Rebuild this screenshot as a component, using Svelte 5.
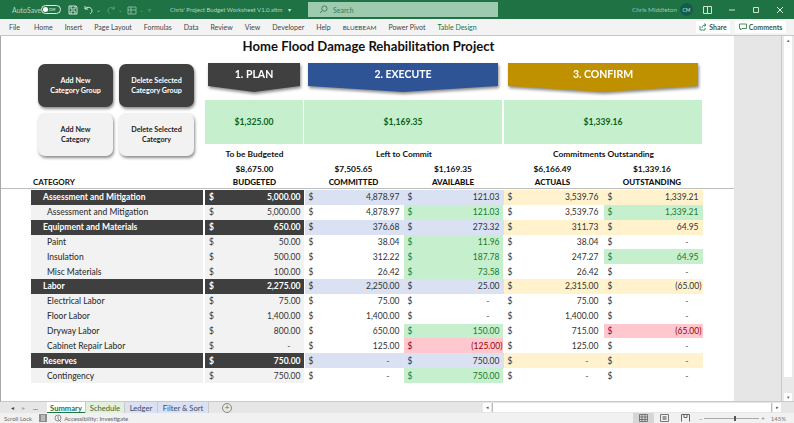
<script>
  const tabs = ['File', 'Home', 'Insert', 'Page Layout', 'Formulas', 'Data', 'Review', 'View', 'Developer', 'Help', 'BLUEBEAM', 'Power Pivot', 'Table Design'];

  // t holds the tone per column: g = green, r = red
  const rows = [
    { name: 'Assessment and Mitigation', group: true, v: ['5,000.00', '4,878.97', '121.03', '3,539.76', '1,339.21'] },
    { name: 'Assessment and Mitigation', v: ['5,000.00', '4,878.97', '121.03', '3,539.76', '1,339.21'], t: ['', '', 'g', '', 'g'] },
    { name: 'Equipment and Materials', group: true, v: ['650.00', '376.68', '273.32', '311.73', '64.95'] },
    { name: 'Paint', v: ['50.00', '38.04', '11.96', '38.04', '-'], t: ['', '', 'g', '', ''] },
    { name: 'Insulation', v: ['500.00', '312.22', '187.78', '247.27', '64.95'], t: ['', '', 'g', '', 'g'] },
    { name: 'Misc Materials', v: ['100.00', '26.42', '73.58', '26.42', '-'], t: ['', '', 'g', '', ''] },
    { name: 'Labor', group: true, v: ['2,275.00', '2,250.00', '25.00', '2,315.00', '(65.00)'] },
    { name: 'Electrical Labor', v: ['75.00', '75.00', '-', '75.00', '-'] },
    { name: 'Floor Labor', v: ['1,400.00', '1,400.00', '-', '1,400.00', '-'] },
    { name: 'Dryway Labor', v: ['800.00', '650.00', '150.00', '715.00', '(65.00)'], t: ['', '', 'g', '', 'r'] },
    { name: 'Cabinet Repair Labor', v: ['-', '125.00', '(125.00)', '125.00', '-'], t: ['', '', 'r', '', ''] },
    { name: 'Reserves', group: true, v: ['750.00', '-', '750.00', '-', '-'] },
    { name: 'Contingency', v: ['750.00', '-', '750.00', '-', '-'], t: ['', '', 'g', '', ''] }
  ];

  const cols = ['budget', 'commit', 'avail', 'actual', 'out'];

  function cellClass(row, i) {
    let c = 'num ' + cols[i];
    if (row.group) c += ' grp';
    if (row.t && row.t[i]) c += ' tone-' + row.t[i];
    return c;
  }
</script>

<div class="excel">
  <header class="titlebar">
    <span class="autosave">AutoSave</span>
    <span class="toggle"><i></i>Off</span>
    <svg class="qa save" width="10" height="10" viewBox="0 0 10 10"><path d="M1 1h7l1 1v7H1zM3 1v3h4V1M3 9V6h4v3" fill="none" stroke="#cfe3d8"/></svg>
    <svg class="qa undo" width="11" height="10" viewBox="0 0 11 10"><path d="M2 1v3h3M2 4c2-3 7-2 7 2 0 1-1 2-2 3" fill="none" stroke="#d5e7dd"/></svg>
    <span class="caret">⌄</span>
    <svg class="qa redo" width="10" height="10" viewBox="0 0 11 10"><path d="M9 1v3H6M9 4C7 1 2 2 2 6c0 1 1 2 2 3" fill="none" stroke="#5fa27f"/></svg>
    <span class="caret dim">⌄</span>
    <svg class="qa grid" width="10" height="10" viewBox="0 0 10 10"><path d="M1 2h8v7H1zM1 5h8M4 2v7" fill="none" stroke="#7fb79a"/></svg>
    <span class="caret dim">⌄</span>
    <span class="caret custom">▿</span>
    <span class="doc">Chris' Project Budget Worksheet V1.0.xltm</span>
    <span class="caret doc-caret">▾</span>
    <div class="search">
      <svg width="9" height="9" viewBox="0 0 10 10"><circle cx="6" cy="4" r="3" fill="none" stroke="#3d7a59"/><path d="M4 6L1 9" stroke="#3d7a59"/></svg>
      <span>Search</span>
    </div>
    <span class="user">Chris Middleton</span>
    <span class="avatar">CM</span>
    <div class="winbtns">
      <svg width="9" height="8" viewBox="0 0 9 8"><path d="M.5.5h8v7h-8zM4.5.5v7" fill="none" stroke="#cfe3d8"/></svg>
      <svg width="8" height="8" viewBox="0 0 8 8"><path d="M1 4h6" stroke="#cfe3d8"/></svg>
      <svg width="8" height="8" viewBox="0 0 8 8"><path d="M1.5 1.5h5v5h-5z" fill="none" stroke="#cfe3d8"/></svg>
      <svg width="8" height="8" viewBox="0 0 8 8"><path d="M1 1l6 6M7 1L1 7" stroke="#e4efe9"/></svg>
    </div>
  </header>

  <nav class="ribbon">
    {#each tabs as tab}
      <span class="rtab" class:design={tab === 'Table Design'} class:file={tab === 'File'} class:caps={tab === 'BLUEBEAM'}>{tab}</span>
    {/each}
    <span class="actions">
      <span class="action share">
        <svg width="8" height="8" viewBox="0 0 8 8"><path d="M1 3v4h5V5M3 5c0-2 1-3 4-3M5 .5L7 2 5 3.5" fill="none" stroke="#217346" stroke-width=".8"/></svg>
        Share
      </span>
      <span class="action comments">
        <svg width="8" height="8" viewBox="0 0 8 8"><path d="M.5 1h7v4.500H3L1.500 7V5.500h-1z" fill="none" stroke="#217346" stroke-width=".8"/></svg>
        Comments
      </span>
    </span>
  </nav>

  <div class="workarea">
    <main class="sheet">
      <h1>Home Flood Damage Rehabilitation Project</h1>

      <section class="top">
        <div class="buttons">
          <div class="btn dark">Add New<br />Category Group</div>
          <div class="btn dark">Delete Selected<br />Category Group</div>
          <div class="btn light">Add New<br />Category</div>
          <div class="btn light">Delete Selected<br />Category</div>
        </div>

        <div class="stage plan">
          <div class="arrow-wrap"><div class="arrow">1. PLAN</div></div>
          <div class="kpi">$1,325.00</div>
          <div class="cap">To be Budgeted</div>
        </div>
        <div class="stage execute">
          <div class="arrow-wrap"><div class="arrow">2. EXECUTE</div></div>
          <div class="kpi">$1,169.35</div>
          <div class="cap">Left to Commit</div>
        </div>
        <div class="stage confirm">
          <div class="arrow-wrap"><div class="arrow">3. CONFIRM</div></div>
          <div class="kpi">$1,339.16</div>
          <div class="cap">Commitments Outstanding</div>
        </div>
      </section>

      <section class="heads">
        <div class="hcat">CATEGORY</div>
        <div class="hcol"><span>$8,675.00</span><b>BUDGETED</b></div>
        <div class="hcol"><span>$7,505.65</span><b>COMMITTED</b></div>
        <div class="hcol"><span>$1,169.35</span><b>AVAILABLE</b></div>
        <div class="hcol"><span>$6,166.49</span><b>ACTUALS</b></div>
        <div class="hcol"><span>$1,339.16</span><b>OUTSTANDING</b></div>
      </section>

      <section class="table">
        {#each rows as row}
          <div class="name" class:grp={row.group}>{row.name}</div>
          {#each row.v as val, i}
            <div class={cellClass(row, i)}>
              <span class="cur">$</span>
              <span class="val" class:dash={val === '-'} class:neg={val.startsWith('(')}>{val}</span>
            </div>
          {/each}
        {/each}
      </section>
    </main>

    <aside class="grey"></aside>
    <div class="vscroll">
      <span class="sb-btn">▴</span>
      <span class="sb-track"></span>
      <span class="sb-btn low">▾</span>
    </div>
  </div>

  <div class="sheetbar">
    <span class="nav">◂</span>
    <span class="nav off">▸</span>
    <span class="nav dots">...</span>
    <span class="stab active">Summary</span>
    <span class="stab sched">Schedule</span>
    <span class="stab blue">Ledger</span>
    <span class="stab blue wide">Filter &amp; Sort</span>
    <span class="add">+</span>
    <span class="hbar">
      <span class="hb-btn">◂</span>
      <span class="hb-track"></span>
      <span class="hb-btn">▸</span>
    </span>
  </div>

  <footer class="status">
    <span>Scroll Lock</span>
    <svg class="macro" width="8" height="8" viewBox="0 0 8 8"><path d="M0 0h8v8H0z" fill="#8d8d8d"/><path d="M2 2h4M2 4h4M2 6h4" stroke="#e6e6e6"/></svg>
    <svg class="acc" width="9" height="9" viewBox="0 0 9 9"><circle cx="4" cy="4" r="3" fill="none" stroke="#777" stroke-width=".8"/><path d="M4 2v3l3 3" fill="none" stroke="#777" stroke-width=".8"/></svg>
    <span>Accessibility: Investigate</span>
    <span class="views">
      <span class="view on"><svg width="9" height="8" viewBox="0 0 9 8"><path d="M.5.5h8v7h-8zM.5 3h8M.5 5.500h8M3 .5v7M6 .5v7" fill="none" stroke="#555" stroke-width=".7"/></svg></span>
      <span class="view"><svg width="9" height="8" viewBox="0 0 9 8"><path d="M.5.5h8v7h-8z" fill="none" stroke="#777"/><path d="M2.500 2h4v4h-4z" fill="#999"/></svg></span>
      <span class="view"><svg width="9" height="8" viewBox="0 0 9 8"><path d="M.5 7.500v-7h8v7M3 .5v3h3v-3" fill="none" stroke="#666"/></svg></span>
    </span>
    <span class="zoom">
      <span>−</span>
      <span class="slider"><i></i></span>
      <span>+</span>
      <span class="pct">145%</span>
    </span>
  </footer>
</div>

<style>
  :global(body) {
    margin: 0;
    background: #fff;
  }

  .excel {
    width: 794px;
    height: 423px;
    display: flex;
    flex-direction: column;
    overflow: hidden;
    font-family: Lato, "Open Sans", sans-serif;
    color: #222;
  }

  /* title bar */
  .titlebar {
    height: 19px;
    flex: none;
    display: flex;
    align-items: center;
    background: #1f7244;
    color: #cfe3d8;
    font-size: 7px;
    padding-left: 12px;
    box-sizing: border-box;
  }
  .autosave { width: 29px; color: #b9d5c6; }
  .toggle {
    width: 20px;
    height: 9px;
    flex: none;
    box-sizing: border-box;
    border: 1px solid #e6f0ea;
    border-radius: 5px;
    display: flex;
    align-items: center;
    gap: 1px;
    padding-left: 1px;
    font-size: 4.500px;
    color: #e6f0ea;
  }
  .toggle i {
    width: 5px;
    height: 5px;
    flex: none;
    border-radius: 50%;
    background: #fff;
  }
  .qa.save { margin-left: 7px; }
  .qa.undo { margin-left: 5px; }
  .qa.redo { margin-left: 3px; }
  .qa.grid { margin-left: 2px; }
  .caret { margin-left: 2px; width: 7px; font-size: 6px; line-height: 6px; color: #b9d5c6; }
  .caret.dim { color: #5fa27f; }
  .caret.custom { margin-left: 2px; color: #8cbda3; }
  .doc { margin-left: 15px; width: 114px; white-space: nowrap; color: #b3d2c1; font-size: 6px; }
  .doc-caret { margin-left: 4px; color: #cfe3d8; }
  .search {
    margin-left: 13px;
    width: 190px;
    height: 15px;
    flex: none;
    background: #9dcbb0;
    display: flex;
    align-items: center;
    gap: 5px;
    padding-left: 11px;
    box-sizing: border-box;
    color: #3d7a59;
    font-size: 7px;
  }
  .user { margin-left: 134px; width: 46px; white-space: nowrap; font-size: 6.4px; color: #9cc6ae; }
  .avatar {
    margin-left: 2px;
    width: 13px;
    height: 13px;
    flex: none;
    border-radius: 50%;
    background: #0f5c50;
    color: #cfe3d8;
    font-size: 5px;
    display: flex;
    align-items: center;
    justify-content: center;
  }
  .winbtns {
    margin-left: 10px;
    display: flex;
    gap: 16px;
    align-items: center;
  }

  /* ribbon */
  .ribbon {
    height: 17px;
    flex: none;
    display: flex;
    align-items: center;
    background: #f3f3f3;
    border-bottom: 1px solid #c6c6c6;
    box-sizing: border-box;
    font-size: 7px;
    color: #444;
    padding-left: 9px;
    gap: 12px;
  }
  .rtab { white-space: nowrap; }
  .rtab.file { margin-right: 2px; }
  .rtab.caps { font-size: 6.400px; }
  .rtab.design { color: #217346; }
  .actions {
    margin-left: auto;
    display: flex;
    gap: 5px;
    margin-right: 8px;
  }
  .action {
    height: 12px;
    background: #fff;
    display: flex;
    align-items: center;
    justify-content: center;
    gap: 2px;
    font-weight: 700;
    font-size: 7px;
    color: #3f5a4b;
  }
  .action.share { width: 34px; }
  .action.comments { width: 51px; }

  /* sheet */
  .workarea {
    height: 366px;
    flex: none;
    display: flex;
    border-left: 1px solid #a8a8a8;
    border-bottom: 1px solid #c9c9c9;
    box-sizing: border-box;
  }
  .sheet {
    width: 733px;
    flex: none;
    background: #fff;
  }
  .grey {
    width: 48px;
    flex: none;
    background: #e6e6e6;
    border-right: 1px solid #c9c9c9;
    box-sizing: border-box;
  }
  .vscroll {
    flex: 1;
    display: flex;
    flex-direction: column;
    background: #e9e9e9;
    padding: 0 2px;
  }
  .sb-btn {
    height: 8px;
    flex: none;
    background: #fff;
    font-size: 5px;
    line-height: 8px;
    text-align: center;
    color: #666;
  }
  .sb-btn.low { margin-top: 16px; }
  .sb-track { flex: 1; background: #fff; }

  h1 {
    margin: 0;
    height: 27px;
    line-height: 20px;
    font-size: 13.100px;
    font-weight: 700;
    text-align: center;
    color: #111;
    width: 735px;
    white-space: nowrap;
  }

  .top {
    display: grid;
    grid-template-columns: 204px 99px 200px 199px;
    height: 100px;
  }
  .buttons {
    display: grid;
    grid-template-columns: 75px 75px;
    grid-auto-rows: 43px;
    column-gap: 6px;
    row-gap: 6px;
    padding: 1px 0 0 37px;
  }
  .btn {
    border-radius: 7px;
    display: flex;
    align-items: center;
    justify-content: center;
    text-align: center;
    font-size: 7.2px;
    line-height: 10px;
    font-weight: 700;
    box-shadow: 1px 2px 3px rgba(0, 0, 0, 0.45);
  }
  .btn.dark { background: #404040; color: #fff; }
  .btn.light { background: #f2f2f2; color: #222; }

  .stage {
    display: flex;
    flex-direction: column;
    align-items: stretch;
  }
  .arrow-wrap {
    height: 37px;
    flex: none;
    padding: 0 4px 0 3px;
    filter: drop-shadow(1px 2px 1.5px rgba(0, 0, 0, 0.45));
  }
  .execute .arrow-wrap { padding: 0 6px 0 4px; }
  .confirm .arrow-wrap { padding: 0 5px 0 4px; }
  .arrow {
    height: 29px;
    display: flex;
    align-items: center;
    justify-content: center;
    padding-bottom: 7px;
    box-sizing: border-box;
    color: #fff;
    font-size: 10.500px;
    font-weight: 700;
    clip-path: polygon(0 0, 100% 0, 100% 79%, 50% 100%, 0 79%);
  }
  .plan .arrow { background: #404040; }
  .execute .arrow { background: #2f5496; }
  .confirm .arrow { background: #bf9000; }
  .kpi {
    height: 44px;
    flex: none;
    margin-right: 1px;
    background: #c6efce;
    color: #0c6318;
    display: flex;
    align-items: center;
    justify-content: center;
    font-size: 8.6px;
    font-weight: 700;
  }
  .execute .kpi { margin-right: 2px; }
  .cap {
    height: 19px;
    flex: none;
    display: flex;
    align-items: center;
    justify-content: center;
    font-size: 8.4px;
    font-weight: 700;
    color: #111;
  }

  .heads {
    display: grid;
    grid-template-columns: 204px 99px 99px 100px 99px 100px;
    height: 26px;
    border-bottom: 1px solid #bdbdbd;
    box-sizing: border-box;
    font-size: 8.4px;
    font-weight: 700;
    color: #111;
  }
  .hcat {
    padding-left: 32px;
    align-self: end;
    line-height: 13px;
    font-size: 8px;
  }
  .hcol {
    display: flex;
    flex-direction: column;
    align-items: center;
    line-height: 13px;
  }
  .hcol b { font-size: 8px; }

  .table {
    display: grid;
    grid-template-columns: 174px 99.500px 99px 100px 100px 99px;
    grid-auto-rows: 14.85px;
    margin: 1px 0 0 30px;
    width: 671.500px;
    font-size: 8.5px;
  }
  .name {
    margin-right: 2px;
    background: #f2f2f2;
    padding-left: 16px;
    display: flex;
    align-items: center;
    color: #333;
    font-weight: 500;
  }
  .name.grp {
    background: #3f3f3f;
    color: #fff;
    font-weight: 700;
    padding-left: 12px;
  }
  .num {
    display: flex;
    align-items: center;
    justify-content: space-between;
    padding: 0 4px;
    color: #333;
    white-space: nowrap;
  }
  .budget { background: #f2f2f2; margin-right: 1px; padding-right: 3px; }
  .budget.grp { background: #3f3f3f; color: #fff; font-weight: 700; }
  .commit.grp, .avail.grp { background: #d9e1f2; }
  .actual { padding-right: 5px; }
  .actual.grp, .out.grp { background: #fff2cc; }
  .tone-g { background: #c6efce; color: #1a7a2c; }
  .tone-r { background: #ffc7ce; color: #9c0006; }
  .avail.tone-g, .avail.tone-r { margin-right: 1px; padding-right: 3px; }
  .val.neg { margin-right: -3px; }
  .val.dash { margin-right: 10px; color: #555; }

  /* sheet tabs */
  .sheetbar {
    height: 11px;
    flex: none;
    display: flex;
    align-items: stretch;
    background: #e6e6e6;
    font-size: 7.6px;
    padding-left: 11px;
    box-sizing: border-box;
    color: #444;
  }
  .nav {
    width: 11px;
    font-size: 6px;
    line-height: 11px;
    color: #444;
  }
  .nav.off { color: #aaa; }
  .nav.dots { width: 14px; font-size: 7px; line-height: 10px; }
  .stab {
    display: flex;
    align-items: center;
    justify-content: center;
    white-space: nowrap;
    border-right: 1px solid #c9c9c9;
    box-sizing: border-box;
  }
  .stab.active {
    width: 39px;
    background: #fff;
    color: #217346;
    font-weight: 700;
    box-shadow: inset 0 -1px 0 #217346;
  }
  .stab.sched { width: 39px; background: #e2efda; color: #34663f; }
  .stab.blue { width: 33px; background: #d9e1f2; color: #3c4a66; }
  .stab.wide { width: 51px; }
  .add {
    margin: 1px 0 0 13px;
    width: 8px;
    height: 8px;
    border: 1px solid #888;
    border-radius: 50%;
    font-size: 8px;
    line-height: 7px;
    text-align: center;
    color: #666;
  }
  .hbar {
    margin-left: auto;
    margin-right: 13px;
    width: 298px;
    display: flex;
    align-items: center;
    box-sizing: border-box;
  }
  .hb-btn {
    width: 8px;
    height: 9px;
    background: #fff;
    font-size: 5px;
    line-height: 9px;
    text-align: center;
    color: #555;
  }
  .hb-track {
    flex: 1;
    height: 9px;
    margin: 0 1px;
    background: #fff;
    border-left: 1px solid #bbb;
    border-right: 1px solid #bbb;
  }

  /* status bar */
  .status {
    height: 10px;
    flex: none;
    display: flex;
    align-items: center;
    background: #f1f1f1;
    font-size: 6px;
    color: #666;
    padding: 0 8px 0 4px;
    box-sizing: border-box;
  }
  .macro { margin: 0 7px 0 7px; }
  .acc { margin-right: 1px; }
  .views {
    margin-left: auto;
    display: flex;
    align-items: center;
  }
  .view {
    width: 21px;
    height: 10px;
    display: flex;
    align-items: center;
    justify-content: center;
  }
  .view.on { background: #d6d6d6; }
  .zoom {
    margin-left: 3px;
    display: flex;
    align-items: center;
    gap: 1px;
    width: 87px;
    color: #777;
  }
  .slider {
    width: 56px;
    height: 1px;
    background: #aaa;
    position: relative;
    margin: 0 1px;
  }
  .slider i {
    position: absolute;
    left: 30px;
    top: -2px;
    width: 2px;
    height: 5px;
    background: #555;
  }
  .pct { margin-left: 5px; }
</style>
